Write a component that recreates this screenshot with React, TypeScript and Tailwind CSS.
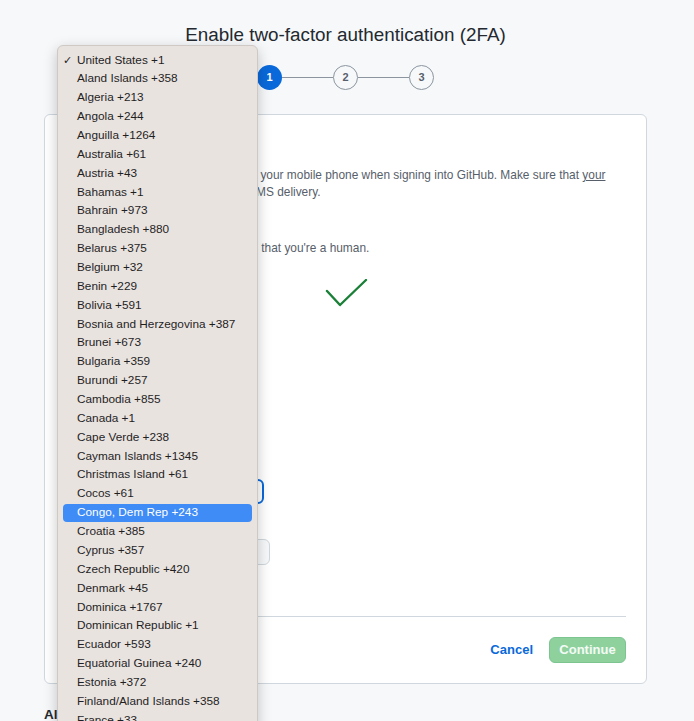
import React from "react";

const countries = [
  "United States +1",
  "Aland Islands +358",
  "Algeria +213",
  "Angola +244",
  "Anguilla +1264",
  "Australia +61",
  "Austria +43",
  "Bahamas +1",
  "Bahrain +973",
  "Bangladesh +880",
  "Belarus +375",
  "Belgium +32",
  "Benin +229",
  "Bolivia +591",
  "Bosnia and Herzegovina +387",
  "Brunei +673",
  "Bulgaria +359",
  "Burundi +257",
  "Cambodia +855",
  "Canada +1",
  "Cape Verde +238",
  "Cayman Islands +1345",
  "Christmas Island +61",
  "Cocos +61",
  "Congo, Dem Rep +243",
  "Croatia +385",
  "Cyprus +357",
  "Czech Republic +420",
  "Denmark +45",
  "Dominica +1767",
  "Dominican Republic +1",
  "Ecuador +593",
  "Equatorial Guinea +240",
  "Estonia +372",
  "Finland/Aland Islands +358",
  "France +33",
];

function Step({ n, active }: { n: number; active?: boolean }) {
  return (
    <div
      className={
        active
          ? "flex h-[25px] w-[25px] items-center justify-center rounded-full bg-[#0969da] text-[11px] font-bold text-white"
          : "flex h-[25px] w-[25px] items-center justify-center rounded-full border border-[#8c959f] text-[11px] font-bold text-[#57606a]"
      }
    >
      {n}
    </div>
  );
}

function CountryMenu() {
  return (
    <div className="absolute left-[57px] top-[45px] h-[720px] w-[201px] overflow-hidden rounded-[6px] border border-[#cfc9c6] bg-[#e9e3e0] pt-[5px] shadow-[0_4px_14px_rgba(0,0,0,0.22)]">
      {countries.map((c, i) => {
        const selected = i === 24;
        return (
          <div
            key={c}
            className={
              selected
                ? "mx-[5px] flex h-[18.86px] items-center rounded-[4px] bg-[#3f8cf6] pl-[14px] text-[11.8px] text-white"
                : "mx-[5px] flex h-[18.86px] items-center pl-[14px] text-[11.8px] text-[#1f1f1f]"
            }
          >
            {i === 0 && (
              <span className="-ml-[14px] mr-[4px] w-[10px] text-[11px]">✓</span>
            )}
            {c}
          </div>
        );
      })}
    </div>
  );
}

export default function App() {
  return (
    <div
      className="relative h-screen overflow-hidden bg-[#f6f8fa] text-[#24292f]"
      style={{ fontFamily: '"Liberation Sans", Arial, sans-serif' }}
    >
      <div className="ml-[44px] w-[603px] pt-[23px]">
        <h1 className="text-center text-[18.85px] leading-[24px] font-normal text-[#24292f]">
          Enable two-factor authentication (2FA)
        </h1>

        <div className="mt-[18px] flex items-center justify-center">
          <Step n={1} active />
          <div className="h-px w-[51px] bg-[#8c959f]" />
          <Step n={2} />
          <div className="h-px w-[51px] bg-[#8c959f]" />
          <Step n={3} />
        </div>

        <div className="mt-[24px] h-[570px] rounded-[6px] border border-[#d0d7de] bg-white px-[20px] pt-[20px]">
          <p className="mt-[32px] text-[11.9px] leading-[17px] text-[#57606a]">
            We will send authentication codes to your mobile phone when signing into GitHub. Make sure that{" "}
            <span className="underline">your</span>
            <br />
            phone number and carrier support SMS delivery.
          </p>

          <p className="mt-[39px] text-[11.9px] leading-[17px] text-[#57606a]">
            Solve the security puzzles to confirm that you're a human.
          </p>

          <div className="mt-[22px] flex justify-center">
            <svg width="44" height="30" viewBox="0 0 44 30" fill="none">
              <polyline
                points="3,12 16,26 42,1"
                stroke="#1a7f37"
                strokeWidth="2.4"
                strokeLinecap="round"
                strokeLinejoin="round"
              />
            </svg>
          </div>

          <div className="mt-[170px] h-[25px] w-[199px] rounded-[6px] border-2 border-[#0969da] bg-white" />
          <div className="mt-[35px] h-[26px] w-[205px] rounded-[6px] border border-[#d0d7de] bg-[#f6f8fa]" />

          <div className="mt-[51px] border-t border-[#d0d7de]" />

          <div className="mt-[20px] flex items-center justify-end gap-[16px]">
            <span className="text-[13px] font-semibold text-[#0969da]">Cancel</span>
            <div className="flex h-[26px] w-[77px] items-center justify-center rounded-[6px] border border-[#7cc591] bg-[#8ed19d] text-[13px] font-bold text-white/90">
              Continue
            </div>
          </div>
        </div>

        <div className="mt-[21px] text-[13.5px] font-semibold">Alternatively</div>
      </div>

      <CountryMenu />
    </div>
  );
}
